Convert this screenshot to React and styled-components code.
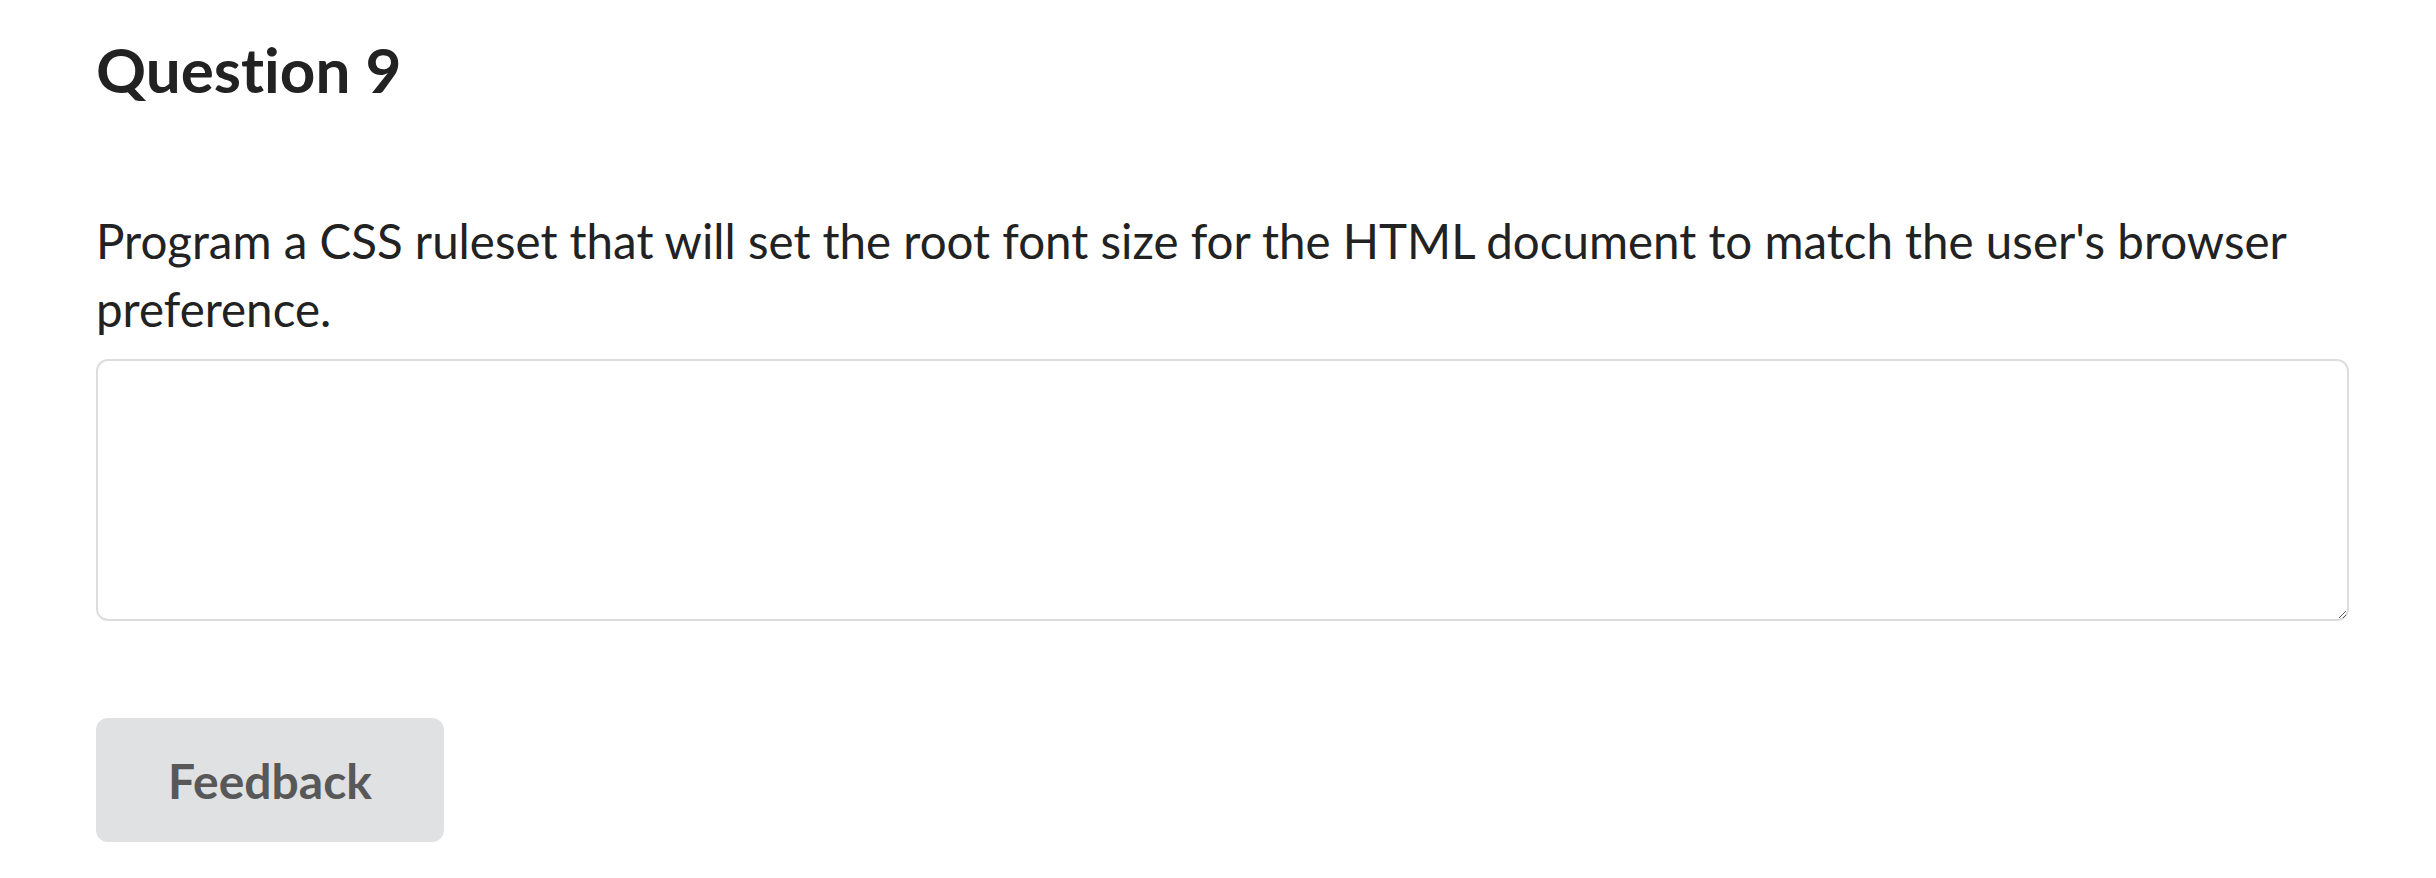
import React from 'react'
import styled, { createGlobalStyle } from 'styled-components'

const GlobalStyle = createGlobalStyle`
    html, body {
        margin: 0;
        padding: 0;
        background: #ffffff;
    }
    body {
        font-family: Lato, "Noto Sans", Arial, sans-serif;
        font-variant-ligatures: none;
        color: #222222;
    }
`;

const Page = styled.main`
    padding: 32px 87px 0 96px;
    display: flex;
    flex-direction: column;
`;

const Title = styled.h2`
    margin: 0;
    font-size: 62px;
    font-weight: 700;
    line-height: 1.2;
    color: #222222;
`;

const Prompt = styled.p`
    margin: 101px 0 16px 0;
    font-size: 47.5px;
    line-height: 68px;
    color: #222222;
`;

const Answer = styled.textarea`
    box-sizing: border-box;
    width: 100%;
    height: 262px;
    border: 2px solid #dddddd;
    border-radius: 12px;
    background: #ffffff;
    font-family: inherit;
    font-size: 45px;
    padding: 12px 18px;
    resize: vertical;
    outline: none;
`;

const Actions = styled.div`
    display: flex;
    margin-top: 97px;
`;

const Button = styled.button`
    width: 348px;
    height: 124px;
    border: none;
    border-radius: 12px;
    background-color: #e0e1e3;
    color: #585858;
    font-family: inherit;
    font-size: 48px;
    font-weight: 700;
    cursor: pointer;
`;

const App = () => {
    return (
        <>
            <GlobalStyle />
            <Page>
                <Title>Question 9</Title>
                <Prompt>
                    Program a CSS ruleset that will set the root font size for the HTML document to match the user's browser preference.
                </Prompt>
                <Answer />
                <Actions>
                    <Button>Feedback</Button>
                </Actions>
            </Page>
        </>
    )
}

export default App
